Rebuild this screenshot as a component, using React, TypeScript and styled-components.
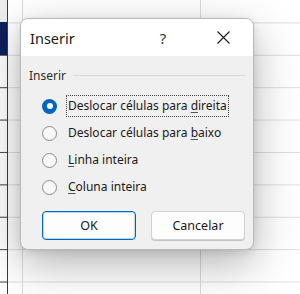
import React, { useState } from "react";
import styled, { createGlobalStyle } from "styled-components";

const GlobalStyle = createGlobalStyle`
  html, body {
    margin: 0;
    padding: 0;
    background: #ffffff;
  }
  body {
    font-family: "Noto Sans", "Open Sans", sans-serif;
    -webkit-font-smoothing: antialiased;
  }
`;

// spreadsheet behind the dialog, drawn as background layers
const Sheet = styled.div`
  width: 300px;
  height: 294px;
  overflow: hidden;
  box-sizing: border-box;
  padding: 18px 0 0 20px;
  background-color: #ffffff;
  background-image:
    linear-gradient(#0c1f5c, #0c1f5c),
    linear-gradient(#3a3a3a, #3a3a3a),
    linear-gradient(to bottom, transparent 31px, #4a4a4a 31px, #4a4a4a 32px, transparent 32px),
    linear-gradient(#dcdcdc, #dcdcdc),
    linear-gradient(#dcdcdc, #dcdcdc),
    linear-gradient(to bottom, transparent 31px, #dedede 31px, #dedede 32px, transparent 32px),
    linear-gradient(#ececec, #ececec);
  background-size:
    7px 33px,
    1px 100%,
    7px 32.4px,
    1px 100%,
    1px 100%,
    100% 32.4px,
    7px 22px;
  background-position:
    0 22px,
    7px 0,
    0 -9px,
    22px 0,
    200px 0,
    0 -9px,
    0 0;
  background-repeat: no-repeat, no-repeat, repeat-y, no-repeat, no-repeat, repeat-y, no-repeat;
`;

const Dialog = styled.div`
  width: 234px;
  height: 232px;
  border-radius: 8px;
  overflow: hidden;
  background: #f0f0f0;
  border: 1px solid #b9b9b9;
  box-sizing: border-box;
  display: flex;
  flex-direction: column;
  box-shadow: 0 14px 44px rgba(0, 0, 0, 0.3), 0 2px 8px rgba(0, 0, 0, 0.1);
`;

const TitleBar = styled.div`
  height: 37px;
  flex: none;
  background: #ffffff;
  display: flex;
  align-items: center;
  padding-left: 9px;
  color: #1b1b1b;
`;

const Title = styled.span`
  font-size: 14.5px;
  flex: 1;
`;

const HelpButton = styled.span`
  width: 30px;
  text-align: center;
  font-size: 15px;
  color: #333;
  margin-right: 35px;
`;

const CloseButton = styled.span`
  width: 20px;
  display: flex;
  justify-content: center;
  margin-right: 20px;
  svg {
    display: block;
  }
`;

const Body = styled.div`
  flex: 1;
  padding: 10px 8px 0 8px;
  display: flex;
  flex-direction: column;
`;

const Legend = styled.div`
  display: flex;
  align-items: center;
  gap: 7px;
  font-size: 12px;
  color: #2b2b2b;
  height: 18px;
  &::after {
    content: "";
    flex: 1;
    height: 1px;
    background: #dcdcdc;
    margin-top: 1px;
  }
`;

const Options = styled.div`
  display: flex;
  flex-direction: column;
  gap: 9px;
  padding: 13px 0 0 13px;
`;

const Option = styled.label`
  display: flex;
  align-items: center;
  gap: 11px;
  height: 18px;
  cursor: default;
`;

const Radio = styled.span<{ $checked: boolean }>`
  width: 15px;
  height: 15px;
  flex: none;
  box-sizing: border-box;
  border-radius: 50%;
  border: ${(p) => (p.$checked ? "none" : "1px solid #8a8a8a")};
  background: ${(p) => (p.$checked ? "#0067c0" : "#f8f8f8")};
  display: flex;
  align-items: center;
  justify-content: center;
  &::after {
    content: "";
    display: ${(p) => (p.$checked ? "block" : "none")};
    width: 6px;
    height: 6px;
    border-radius: 50%;
    background: #ffffff;
  }
`;

const OptionText = styled.span<{ $focused: boolean }>`
  font-size: 12px;
  color: #1a1a1a;
  padding: 1px 1px 2px 1px;
  margin-left: -2px;
  border: 1px ${(p) => (p.$focused ? "dotted #444" : "solid transparent")};
  u {
    text-decoration-color: #555;
    text-underline-offset: 2px;
  }
`;

const Buttons = styled.div`
  display: flex;
  gap: 15px;
  padding: 0 0 0 13px;
  margin-top: 15px;
`;

const Button = styled.button<{ $primary?: boolean }>`
  width: 94px;
  height: 29px;
  box-sizing: border-box;
  border-radius: 4px;
  background: #fdfdfd;
  border: 1px solid ${(p) => (p.$primary ? "#0067c0" : "#d3d3d3")};
  box-shadow: ${(p) => (p.$primary ? "inset 0 0 0 1px rgba(0,103,192,0.25)" : "0 1px 0 #c4c4c4")};
  font-family: "Noto Sans", "Open Sans", sans-serif;
  font-size: 12.5px;
  color: #1a1a1a;
  padding: 0;
`;

const options: { label: React.ReactNode }[] = [
  { label: <>Deslocar células para <u>d</u>ireita</> },
  { label: <>Deslocar células para <u>b</u>aixo</> },
  { label: <><u>L</u>inha inteira</> },
  { label: <><u>C</u>oluna inteira</> },
];

export default function App() {
  const [selected, setSelected] = useState(0);
  return (
    <>
      <GlobalStyle />
      <Sheet>
        <Dialog>
          <TitleBar>
            <Title>Inserir</Title>
            <HelpButton>?</HelpButton>
            <CloseButton>
              <svg width="13" height="13" viewBox="0 0 13 13">
                <path d="M0.5 0.5 L12.5 12.5 M12.5 0.5 L0.5 12.5" stroke="#222" strokeWidth="1.2" fill="none" />
              </svg>
            </CloseButton>
          </TitleBar>
          <Body>
            <Legend>Inserir</Legend>
            <Options>
              {options.map((o, i) => (
                <Option key={i} onClick={() => setSelected(i)}>
                  <Radio $checked={selected === i} />
                  <OptionText $focused={i === 0}>{o.label}</OptionText>
                </Option>
              ))}
            </Options>
            <Buttons>
              <Button $primary>OK</Button>
              <Button>Cancelar</Button>
            </Buttons>
          </Body>
        </Dialog>
      </Sheet>
    </>
  );
}
